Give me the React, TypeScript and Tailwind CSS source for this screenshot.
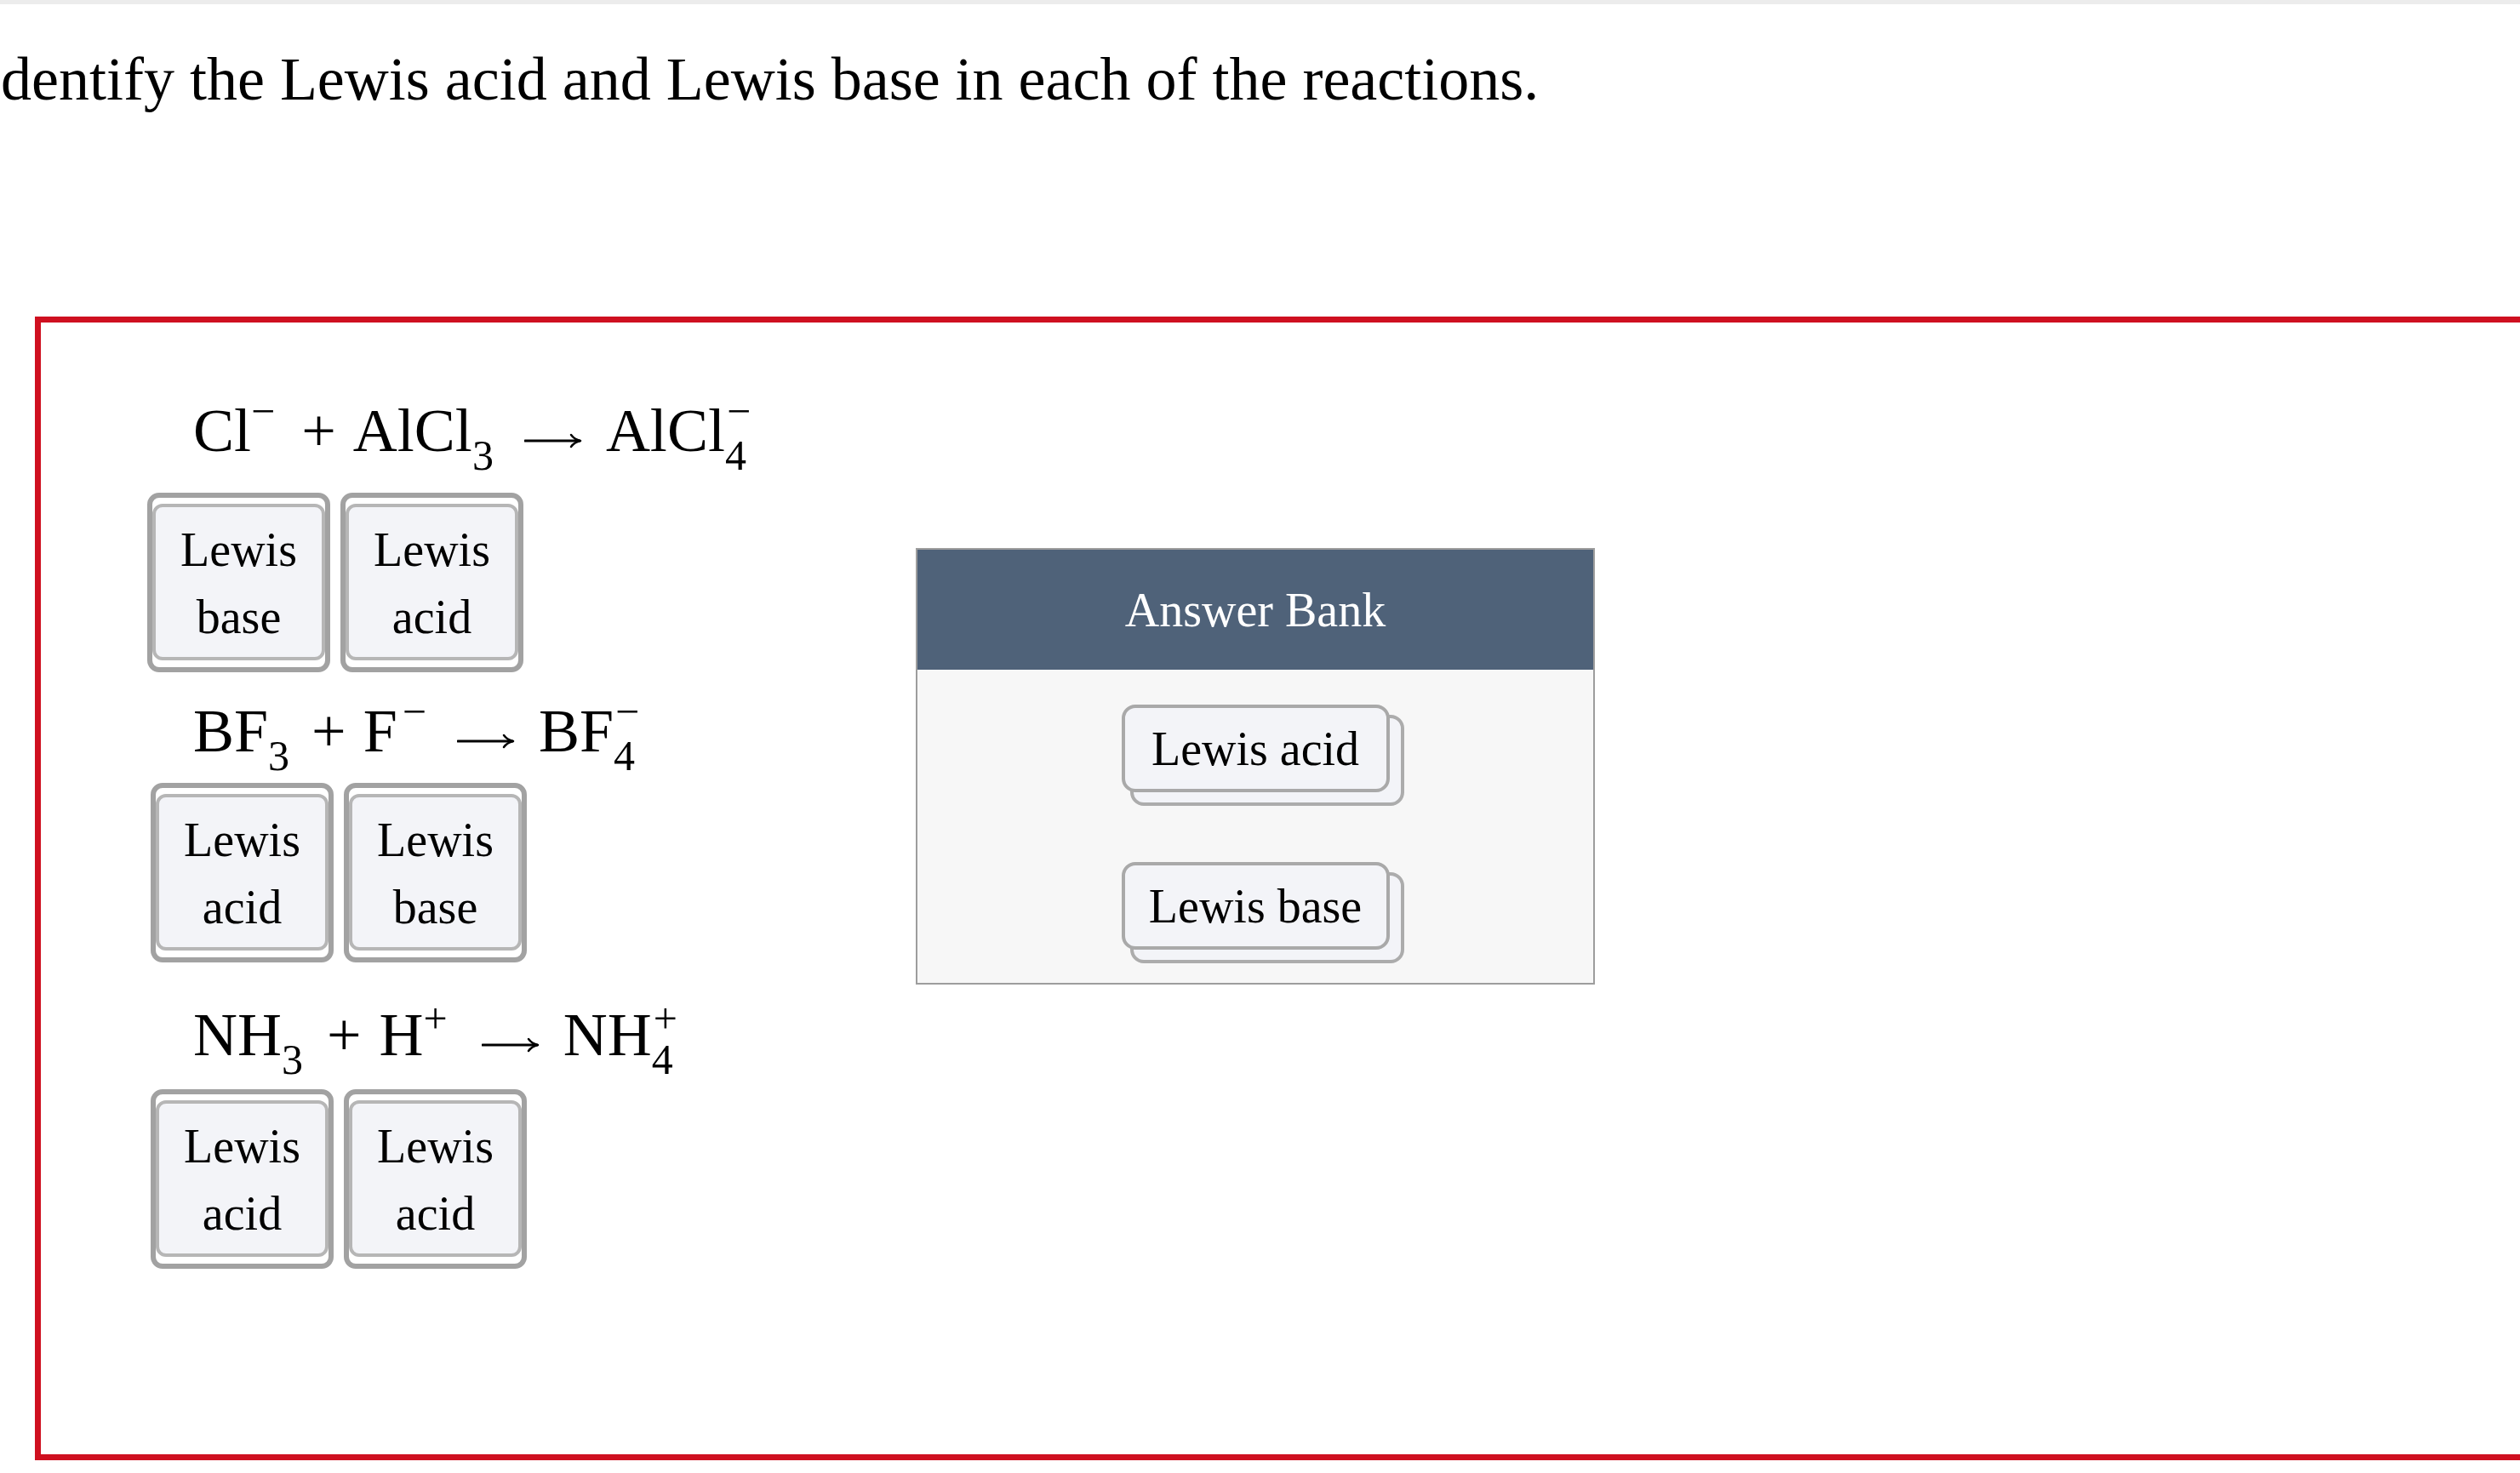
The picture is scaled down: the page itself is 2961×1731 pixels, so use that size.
import React from 'react';

const serif = "font-['Liberation_Serif','Times_New_Roman',serif]";

function Sub({ children }: { children: React.ReactNode }) {
  return <span className="relative top-[22px] text-[50px] leading-none">{children}</span>;
}

function Sup({ children, plus }: { children: React.ReactNode; plus?: boolean }) {
  return (
    <span className={`relative text-[50px] leading-none ${plus ? 'top-[-26px]' : 'top-[-30px]'}`}>
      {children}
    </span>
  );
}

// stacked sub + sup, like AlCl4-
function SubSup({ sub, sup, plus }: { sub: string; sup: string; plus?: boolean }) {
  return (
    <span className="relative inline-block text-[50px] leading-none">
      <span className="relative top-[22px]">{sub}</span>
      <span className={`absolute left-[2px] ${plus ? 'top-[-26px]' : 'top-[-30px]'}`}>{sup}</span>
    </span>
  );
}

// reaction arrow, drawn thin like the math font one
function Arrow({ className }: { className: string }) {
  return (
    <svg
      className={`inline-block align-[2px] ${className}`}
      width="68"
      height="20"
      viewBox="0 0 68 20"
      fill="none"
      stroke="#000"
      strokeLinecap="round"
    >
      <path d="M1 10 H65" strokeWidth="3" />
      <path d="M55 3 Q59 8.5 66 10 Q59 11.5 55 17" strokeWidth="2.5" strokeLinejoin="round" />
    </svg>
  );
}

function DropZone({ top, bottom }: { top: string; bottom: string }) {
  return (
    <div className="w-[215px] h-[211px] rounded-[14px] border-[6px] border-[#a2a2a2] bg-white pt-[7px] pb-[8px]">
      <div className="h-[184px] rounded-[12px] border-[4px] border-[#b6b6b6] bg-[#f3f4f8] pt-[11px] text-center text-[56px] leading-[79px] text-black">
        <div>{top}</div>
        <div>{bottom}</div>
      </div>
    </div>
  );
}

function BankChip({ label }: { label: string }) {
  return (
    <div className="relative w-[315px] h-[103px]">
      <div className="absolute left-[10px] right-[-17px] top-[12px] bottom-[-16px] rounded-[16px] border-[4px] border-[#acacac] bg-[#f3f4f8]" />
      <div className="relative flex h-full w-full items-center justify-center rounded-[16px] border-[4px] border-[#a9a9a9] bg-[#f3f4f8] text-[56px] text-black">
        {label}
      </div>
    </div>
  );
}

export default function App() {
  return (
    <div className={`w-[2961px] h-[1731px] overflow-hidden bg-white border-t-[5px] border-[#ececec] ${serif}`}>
      <div className="mt-[52px] ml-[-23px] h-[72px] whitespace-nowrap text-[72px] leading-[72px] text-black">
        Identify the Lewis acid and Lewis base in each of the reactions.
      </div>

      <div className="mt-[243px] ml-[41px] w-[2960px] h-[1344px] border-[7px] border-[#cf1020] flex items-start">
        {/* reactions */}
        <div className="w-[1028px] pt-[91px] pl-[125px]">
          <div className="ml-[54px] h-[72px] whitespace-nowrap text-[72px] leading-[72px] text-black">
            <span>Cl</span>
            <Sup>−</Sup>
            <span className="ml-[31px]">+</span>
            <span className="ml-[20px]">AlCl</span>
            <Sub>3</Sub>
            <Arrow className="ml-[36px]" />
            <span className="ml-[28px]">AlCl</span>
            <SubSup sub="4" sup="−" />
          </div>
          <div className="mt-[37px] flex gap-[12px]">
            <DropZone top="Lewis" bottom="base" />
            <DropZone top="Lewis" bottom="acid" />
          </div>

          <div className="mt-[33px] ml-[54px] h-[72px] whitespace-nowrap text-[72px] leading-[72px] text-black">
            <span>BF</span>
            <Sub>3</Sub>
            <span className="ml-[26px]">+</span>
            <span className="ml-[20px]">F</span>
            <span className="ml-[6px]">
              <Sup>−</Sup>
            </span>
            <Arrow className="ml-[36px]" />
            <span className="ml-[28px]">BF</span>
            <SubSup sub="4" sup="−" />
          </div>
          <div className="mt-[25px] ml-[4px] flex gap-[12px]">
            <DropZone top="Lewis" bottom="acid" />
            <DropZone top="Lewis" bottom="base" />
          </div>

          <div className="mt-[49px] ml-[54px] h-[72px] whitespace-nowrap text-[72px] leading-[72px] text-black">
            <span>NH</span>
            <Sub>3</Sub>
            <span className="ml-[28px]">+</span>
            <span className="ml-[21px]">H</span>
            <Sup plus>+</Sup>
            <Arrow className="ml-[40px]" />
            <span className="ml-[28px]">NH</span>
            <SubSup sub="4" sup="+" plus />
          </div>
          <div className="mt-[28px] ml-[4px] flex gap-[12px]">
            <DropZone top="Lewis" bottom="acid" />
            <DropZone top="Lewis" bottom="acid" />
          </div>
        </div>

        {/* answer bank */}
        <div className="mt-[265px] w-[798px] h-[513px] border-2 border-[#9d9d9d] bg-[#f7f7f7] flex flex-col">
          <div className="h-[141px] bg-[#4f6279] flex items-center justify-center text-[56px] text-white">
            Answer Bank
          </div>
          <div className="flex flex-col items-center gap-[82px] pt-[41px]">
            <BankChip label="Lewis acid" />
            <BankChip label="Lewis base" />
          </div>
        </div>
      </div>
    </div>
  );
}
